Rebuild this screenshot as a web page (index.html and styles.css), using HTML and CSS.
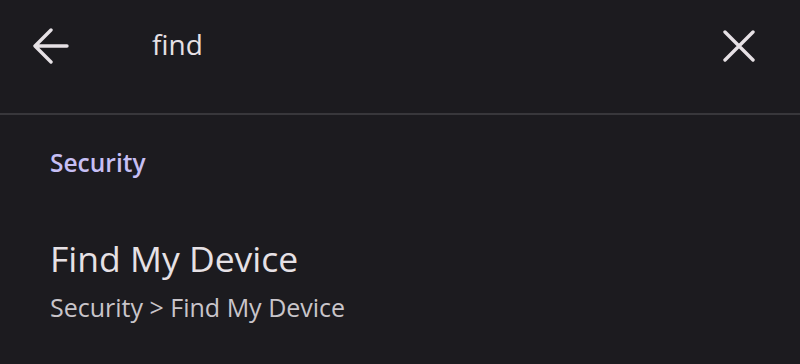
FILE: index.html
```html
<!DOCTYPE html>
<html lang="en">
<head>
    <meta charset="UTF-8">
    <meta name="viewport" content="width=device-width, initial-scale=1.0">
    <title>Search settings</title>
    <link rel="stylesheet" href="styles.css">
</head>
<body>
    <!-- Search bar -->
    <div class="search-bar">
        <button class="icon-btn back" aria-label="Back">
            <svg width="36" height="36" viewBox="0 0 36 36">
                <path d="M34 18H3M18 2L2 18l16 16" fill="none" stroke="#e6e1e5" stroke-width="3.4" stroke-linecap="round" stroke-linejoin="round"/>
            </svg>
        </button>
        <div class="query">find</div>
        <button class="icon-btn close" aria-label="Clear">
            <svg width="32" height="32" viewBox="0 0 32 32">
                <path d="M2 2L30 30M30 2L2 30" fill="none" stroke="#e6e1e5" stroke-width="3.4" stroke-linecap="round"/>
            </svg>
        </button>
    </div>

    <!-- Results -->
    <div class="results">
        <div class="category">Security</div>
        <div class="result">
            <div class="result-title">Find My Device</div>
            <div class="result-path">Security &gt; Find My Device</div>
        </div>
    </div>
</body>
</html>
```

FILE: styles.css
```css
body {
    margin: 0;
    padding: 0;
    background-color: #1c1b1f;
    font-family: "Open Sans", "Liberation Sans", sans-serif;
    color: #e6e1e5;
}
.search-bar {
    display: flex;
    align-items: center;
    height: 92px;
    padding: 0 45px 21px 33px;
    border-bottom: 2px solid #38373b;
}
.icon-btn {
    display: flex;
    align-items: center;
    justify-content: center;
    background: none;
    border: none;
    padding: 0;
    cursor: pointer;
}
.icon-btn.back {
    margin-top: -1px;
}
.query {
    flex: 1;
    margin-left: 83px;
    padding-bottom: 5px;
    font-size: 28px;
    line-height: 36px;
    color: #e6e1e5;
}
.results {
    padding: 32px 50px 0 50px;
}
.category {
    font-size: 24.5px;
    font-weight: 600;
    line-height: 32px;
    color: #c6bff4;
}
.result {
    margin-top: 57px;
}
.result-title {
    font-size: 35.5px;
    line-height: 44px;
    color: #e6e1e5;
}
.result-path {
    margin-top: 11px;
    font-size: 25px;
    line-height: 32px;
    color: #c9c5ca;
}
```
